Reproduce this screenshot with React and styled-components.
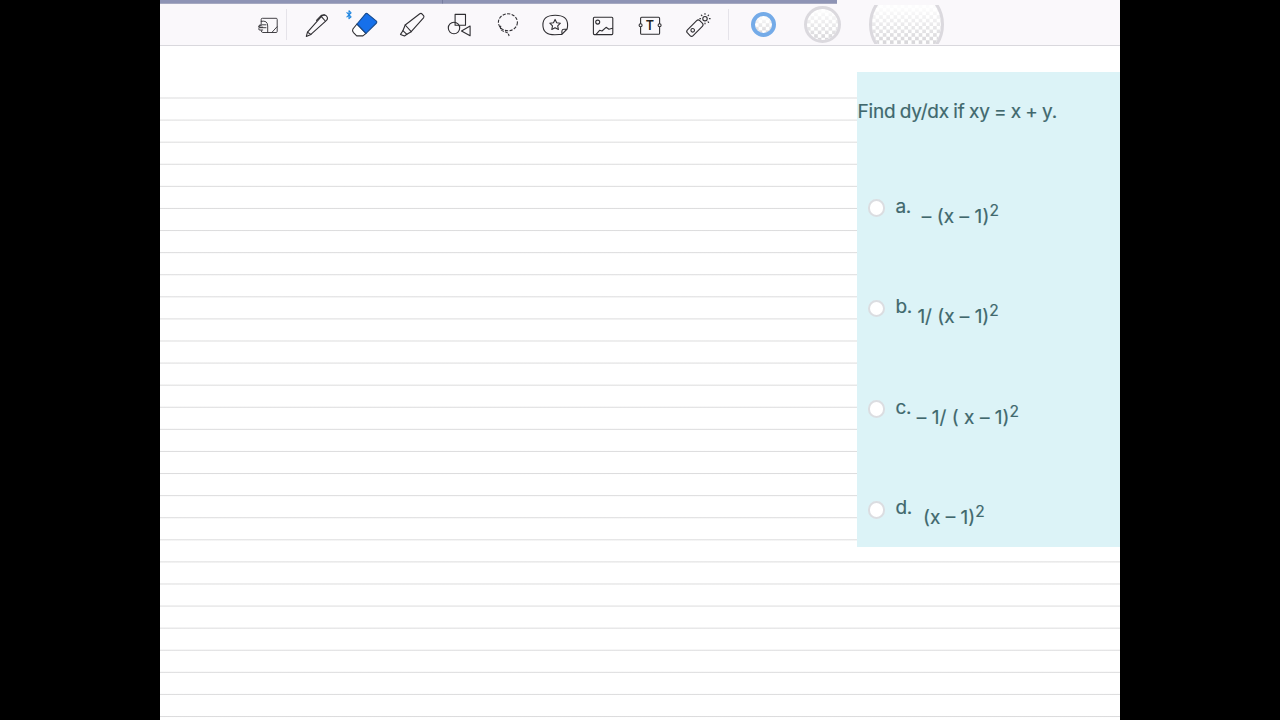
import React from "react";
import styled, { createGlobalStyle } from "styled-components";

const GlobalStyle = createGlobalStyle`
  * { box-sizing: border-box; }
  body { margin: 0; background: #000; overflow: hidden; }
`;

const Stage = styled.div`
  width: 1280px;
  height: 720px;
  display: flex;
  justify-content: center;
  background: #000;
  font-family: Inter, "Liberation Sans", sans-serif;
`;

const Tablet = styled.div`
  width: 960px;
  height: 720px;
  display: flex;
  flex-direction: column;
  background: #fff;
  overflow: hidden;
`;

const TabStrip = styled.div`
  display: flex;
  height: 4px;
  background: #faf8fb;
`;

const Tab = styled.div`
  width: ${(p) => p.$width}px;
  background: #8e94b5;
  border-bottom: 1px solid #a6a9c1;
  border-right: ${(p) => (p.$divided ? "1px solid #777d9f" : "none")};
`;

const Toolbar = styled.div`
  display: flex;
  align-items: flex-start;
  height: 42px;
  padding-left: 90px;
  background: #faf8fb;
  border-bottom: 1px solid #d9d8dd;
`;

const Icon = styled.svg`
  flex: none;
  width: ${(p) => p.$width}px;
  height: 40px;
  margin-top: 1px;
  fill: none;
  stroke: #2f2e32;
  stroke-width: 1.1;
  stroke-linecap: round;
  stroke-linejoin: round;
`;

const Divider = styled.div`
  flex: none;
  width: 1px;
  height: 31px;
  margin: 5px ${(p) => p.$after}px 0 ${(p) => p.$before}px;
  background: #e5e3e9;
`;

const Sizes = styled.div`
  display: flex;
  align-items: center;
  height: 41px;
`;

const checker = (shade) => `repeating-conic-gradient(${shade} 0% 25%, #fff 0% 50%)`;

const Size = styled.div`
  position: relative;
  flex: none;
  width: ${(p) => p.$d}px;
  height: ${(p) => p.$d}px;
  margin-left: ${(p) => p.$gap || 0}px;
  border-radius: 50%;
  border: ${(p) => p.$ring}px solid ${(p) => p.$color};
  background: linear-gradient(#fffe ${(p) => p.$fade}%, #fff0 ${(p) => 100 - p.$fade}%),
    ${checker("#d9d8db")} 0 0 / 7.2px 7.2px;
  background-clip: padding-box;
`;

const SizeClip = styled.div`
  display: flex;
  align-items: center;
  height: 39px;
  margin-left: 28px;
  overflow: hidden;
`;

const Paper = styled.div`
  position: relative;
  flex: 1;
  padding-top: 41px;
`;

const Rules = styled.div`
  height: 633px;
  background: repeating-linear-gradient(
    #fff 0 10px, #dcdcdd 11px, #fff 12px 22.09px
  );
`;

const Question = styled.div`
  position: absolute;
  left: 696.5px;
  top: 26px;
  width: 264px;
  height: 475px;
  padding: 27.5px 0 0 1px;
  background: #dcf3f7;
  color: #40686d;
  font-size: 19px;
  -webkit-text-stroke: 0.2px #40686d;
`;

const Prompt = styled.div`
  height: 24px;
  line-height: 24px;
  letter-spacing: -0.2px;
  word-spacing: -0.75px;
  white-space: pre;
`;

const Options = styled.div`
  display: flex;
  flex-direction: column;
  padding: 71px 0 0 10px;
`;

const Option = styled.div`
  display: flex;
  align-items: flex-start;
  height: 100.6px;
`;

const Radio = styled.div`
  flex: none;
  width: 17.5px;
  height: 17.5px;
  margin-top: 4.8px;
  border-radius: 50%;
  border: 2px solid #dbdde1;
  background: #fff;
`;

const Letter = styled.div`
  width: ${(p) => p.$width}px;
  margin-left: 10.5px;
  line-height: 24px;
  letter-spacing: -0.3px;
  flex: none;
`;

const Expression = styled.div`
  display: flex;
  margin-top: 10.2px;
  line-height: 24px;
  letter-spacing: ${(p) => p.$tracking}px;
  white-space: pre;
`;

const Power = styled.span`
  font-size: 15.5px;
  line-height: 12px;
  letter-spacing: 0;
`;

const tools = [
  <g key="pen">
    <path d="M-9.6 11.4-8.4 7.2 5.6-8.6Q7.6-11.2 10.2-9.4 12.8-7 10.6-4.6L-5 9.4Z" />
    <path d="M-8.4 7.2-5 9.4M5.5-8.4 9.4-4M8.6-10 5.4-9.6.6-4.6" />
  </g>,
  <g key="eraser">
    <path d="M-6.9-1-11 4Q-12 6-10.4 7.7L-7.2 10.9H-1L2.1 8.3Z" fill="#fff" />
    <path d="M1.6-11.2Q2.6-12 3.7-11.2L12.5-3.9Q13.4-2.9 12.6-2L2.1 8.3-6.9-1Z" fill="#1670ea" stroke="#174b8e" />
    <path d="M-17-12.3-12.8-8.2-14.9-6.3V-14.3L-12.8-12.2-17-8.2" stroke="#1d85e0" />
  </g>,
  <g key="highlighter">
    <path d="M-5.7 0 8.9-11.2Q10.2-12.1 11.3-10.9L12.8-9.2Q13.4-8.2 12.6-7.2L.3 6.7-4 9.3-8 5.7Z" />
    <path d="M-5.7 0 .3 6.7M-8 5.7-10.4 9.4-6.4 11-4 9.3" />
  </g>,
  <g key="shapes">
    <rect x="-3.8" y="-10.6" width="10.4" height="10.8" />
    <circle cx="-4.9" cy="3" r="5.7" />
    <path d="M2.6 6 11.2 1V10.8Z" />
  </g>,
  <g key="lasso">
    <ellipse cx="1" cy="-2.7" rx="9.5" ry="8.5" strokeDasharray="3.2 1.4" strokeLinecap="butt" />
    <path d="M-6 .8C-7.6 3.8-5.4 6-2.4 6.6S1.6 8.6 2.2 11" strokeDasharray="3.2 1" strokeLinecap="butt" />
  </g>,
  <g key="sticker">
    <path d="M7 9.3Q4.8 9.7 0 9.7C-8 9.7-12 6.6-12-.1S-8-9.8.3-9.8 12.7-6.8 12.7 0Q12.7 2.4 12.2 4L7 9.3V6Q7.2 4.2 9 4.2H12" />
    <path d="M.2-5.6 1.8-2.2 5.5-1.8 2.8.8 3.5 4.5.2 2.7-3.1 4.5-2.4.8-5.1-1.8-1.4-2.2Z" />
  </g>,
  <g key="image">
    <rect x="-9.5" y="-7.8" width="19.4" height="17.4" rx="1" />
    <circle cx="-5.2" cy="-2.9" r="2" />
    <path d="M-6.6 9.1-3.3 5.3-.9 6 3.2 2.3 6 4.3 9.6 3.3" />
  </g>,
  <g key="text">
    <path d="M-9.3-1.6V-6.6Q-9.3-7.7-8.3-7.7H8.7Q9.7-7.7 9.7-6.6V-1.6M9.7 2.2V8.2Q9.7 9.3 8.7 9.3H-8.3Q-9.3 9.3-9.3 8.2V2.2" />
    <circle cx="-9.3" cy=".3" r="1.5" />
    <circle cx="9.7" cy=".3" r="1.5" />
    <text x="0" y="5" textAnchor="middle" fontSize="12.5" fontWeight="600" fill="#222" stroke="none">T</text>
  </g>,
  <g key="laser">
    <rect x="-8.7" y="-4" width="17.4" height="8" rx="2.2" transform="translate(-3 3.1) rotate(-45)" />
    <circle cx="-5.2" cy="5.3" r="1.8" />
    <circle cx="7.1" cy="-6.3" r="2.2" />
    <path d="M7.1-11.4V-10.8M7.1-1.8V-1.2M2-6.3H2.6M11.6-6.3H12.2M3.5-9.9 4-9.4M10.2-3.2 10.7-2.7M10.2-9.4 10.7-9.9" strokeWidth="1.2" />
  </g>,
];

const options = [
  { letter: "a.", text: "– (x – 1)", width: 26.2, tracking: 0.08 },
  { letter: "b.", text: "1/ (x – 1)", width: 21.9, tracking: -0.02 },
  { letter: "c.", text: "– 1/ ( x – 1)", width: 21.2, tracking: 0.05 },
  { letter: "d.", text: "(x – 1)", width: 27.5, tracking: 0 },
];

export default function App() {
  return (
    <Stage>
      <GlobalStyle />
      <Tablet>
        <TabStrip>
          <Tab $width={283} $divided />
          <Tab $width={394} />
        </TabStrip>
        <Toolbar>
          <Icon $width={36} viewBox="-18 -20 36 40">
            <path d="M-6.8-1V-5.6Q-6.8-6.7-5.7-6.7H8.2Q9.2-6.7 9.2-5.6V6.4Q9.2 7.5 8.2 7.5H-5.2Q-6.8 7.5-6.8 5.6M-6.8-3.7Q-.3-5-.3 1V7.2M4 7.3 9 1.8M-6.8.5Q-9.5.2-9.5 2M-5.3 2.2H-8.8Q-10-.1-6.8-.2H-2M-5.3 5H-8.8Q-10 3.2-8.3 2.7H-2" strokeWidth=".9" />
          </Icon>
          <Divider $before={0} $after={4.9} />
          {tools.map((drawing) => (
            <Icon key={drawing.key} $width={47.8} viewBox="-23.9 -20 47.8 40">
              {drawing}
            </Icon>
          ))}
          <Divider $before={5.5} $after={22.4} />
          <Sizes>
            <Size $d={25} $ring={4} $color="#74abe8" $fade={5} />
            <Size $d={37} $ring={3} $color="#dbd9de" $gap={28} $fade={5} />
            <SizeClip>
              <Size $d={75} $ring={3} $color="#dbd9de" $fade={26} />
            </SizeClip>
          </Sizes>
        </Toolbar>
        <Paper>
          <Rules />
          <Question>
            <Prompt>Find dy/dx if xy = x + y.</Prompt>
            <Options>
              {options.map((o) => (
                <Option key={o.letter}>
                  <Radio />
                  <Letter $width={o.width}>{o.letter}</Letter>
                  <Expression $tracking={o.tracking}>
                    {o.text}
                    <Power>2</Power>
                  </Expression>
                </Option>
              ))}
            </Options>
          </Question>
        </Paper>
      </Tablet>
    </Stage>
  );
}
